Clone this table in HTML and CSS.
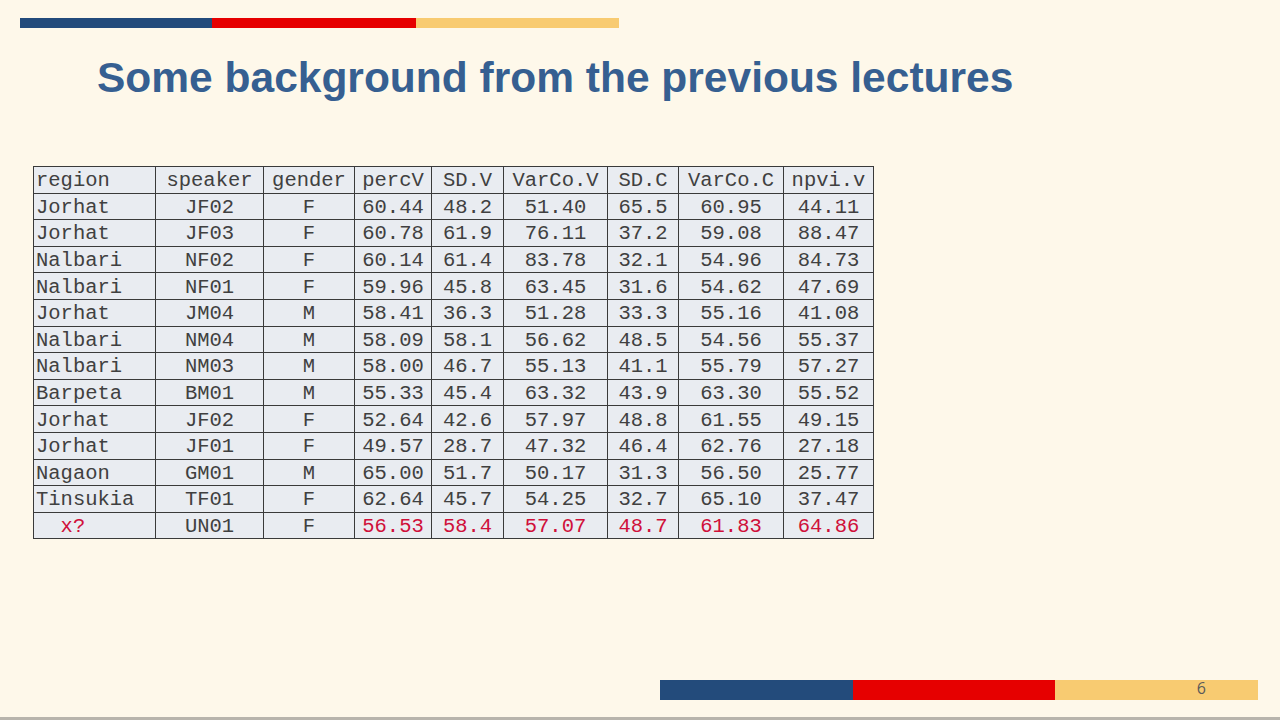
FILE: index.html
```html
<!DOCTYPE html>
<html>
<head>
<meta charset="utf-8">
<link rel="stylesheet" href="styles.css">
</head>
<body>
<div class="slide">
  <div class="bar top-bar"><span class="seg blue"></span><span class="seg red"></span><span class="seg yellow"></span></div>
  <h1 class="title">Some background from the previous lectures</h1>
  <table class="data">
    <colgroup>
      <col style="width:122px"><col style="width:108px"><col style="width:91px"><col style="width:77px"><col style="width:72px"><col style="width:104px"><col style="width:71px"><col style="width:105px"><col style="width:90px">
    </colgroup>
    <tr><td class="l">region</td><td>speaker</td><td>gender</td><td>percV</td><td>SD.V</td><td>VarCo.V</td><td>SD.C</td><td>VarCo.C</td><td>npvi.v</td></tr>
    <tr><td class="l">Jorhat</td><td>JF02</td><td>F</td><td>60.44</td><td>48.2</td><td>51.40</td><td>65.5</td><td>60.95</td><td>44.11</td></tr>
    <tr><td class="l">Jorhat</td><td>JF03</td><td>F</td><td>60.78</td><td>61.9</td><td>76.11</td><td>37.2</td><td>59.08</td><td>88.47</td></tr>
    <tr><td class="l">Nalbari</td><td>NF02</td><td>F</td><td>60.14</td><td>61.4</td><td>83.78</td><td>32.1</td><td>54.96</td><td>84.73</td></tr>
    <tr><td class="l">Nalbari</td><td>NF01</td><td>F</td><td>59.96</td><td>45.8</td><td>63.45</td><td>31.6</td><td>54.62</td><td>47.69</td></tr>
    <tr><td class="l">Jorhat</td><td>JM04</td><td>M</td><td>58.41</td><td>36.3</td><td>51.28</td><td>33.3</td><td>55.16</td><td>41.08</td></tr>
    <tr><td class="l">Nalbari</td><td>NM04</td><td>M</td><td>58.09</td><td>58.1</td><td>56.62</td><td>48.5</td><td>54.56</td><td>55.37</td></tr>
    <tr><td class="l">Nalbari</td><td>NM03</td><td>M</td><td>58.00</td><td>46.7</td><td>55.13</td><td>41.1</td><td>55.79</td><td>57.27</td></tr>
    <tr><td class="l">Barpeta</td><td>BM01</td><td>M</td><td>55.33</td><td>45.4</td><td>63.32</td><td>43.9</td><td>63.30</td><td>55.52</td></tr>
    <tr><td class="l">Jorhat</td><td>JF02</td><td>F</td><td>52.64</td><td>42.6</td><td>57.97</td><td>48.8</td><td>61.55</td><td>49.15</td></tr>
    <tr><td class="l">Jorhat</td><td>JF01</td><td>F</td><td>49.57</td><td>28.7</td><td>47.32</td><td>46.4</td><td>62.76</td><td>27.18</td></tr>
    <tr><td class="l">Nagaon</td><td>GM01</td><td>M</td><td>65.00</td><td>51.7</td><td>50.17</td><td>31.3</td><td>56.50</td><td>25.77</td></tr>
    <tr><td class="l">Tinsukia</td><td>TF01</td><td>F</td><td>62.64</td><td>45.7</td><td>54.25</td><td>32.7</td><td>65.10</td><td>37.47</td></tr>
    <tr><td class="l red-t">  x?</td><td>UN01</td><td>F</td><td class="red-t">56.53</td><td class="red-t">58.4</td><td class="red-t">57.07</td><td class="red-t">48.7</td><td class="red-t">61.83</td><td class="red-t">64.86</td></tr>
  </table>
  <div class="spacer"></div>
  <div class="bar bottom-bar"><span class="seg blue"></span><span class="seg red"></span><span class="seg yellow"><span class="pagenum">6</span></span></div>
  <div class="edge"></div>
</div>
</body>
</html>
```
FILE: styles.css
```css
html, body {
  margin: 0;
  padding: 0;
  background: #fef8ea;
}
.slide {
  width: 1280px;
  height: 720px;
  background: #fef8ea;
  display: flex;
  flex-direction: column;
  overflow: hidden;
}
.bar {
  display: flex;
  flex: none;
}
.top-bar {
  margin-top: 18px;
  margin-left: 20px;
  height: 10px;
}
.top-bar .blue { width: 192px; }
.top-bar .red { width: 204px; }
.top-bar .yellow { width: 203px; }
.seg { display: block; height: 100%; }
.blue { background: #234b7b; }
.red { background: #e60000; }
.yellow { background: #f8cb71; }
.title {
  margin: 26px 0 0 97px;
  font-family: "Liberation Sans", Arial, sans-serif;
  font-weight: bold;
  font-size: 42.5px;
  line-height: 48px;
  color: #365f91;
}
.data {
  margin: 64px 0 0 33px;
  border-collapse: collapse;
  table-layout: fixed;
  width: 840px;
  font-family: "Liberation Mono", "Courier New", monospace;
  font-size: 20.5px;
  color: #404040;
}
.data td {
  border: 1px solid #3a3a3a;
  background: #e9ecf1;
  height: 23.6px;
  padding: 2px 0 0 0;
  text-align: center;
  white-space: pre;
  line-height: 23px;
}
.data td.l {
  text-align: left;
  padding-left: 2px;
}
.data td.red-t {
  color: #d0103a;
}
.spacer { flex: 1; }
.bottom-bar {
  margin-left: 660px;
  height: 20px;
  margin-bottom: 17px;
}
.bottom-bar .blue { width: 193px; }
.bottom-bar .red { width: 202px; }
.bottom-bar .yellow {
  width: 203px;
  display: flex;
  justify-content: flex-end;
  align-items: flex-start;
}
.pagenum {
  font-family: "Open Sans", "Liberation Sans", sans-serif;
  font-size: 16px;
  line-height: 16px;
  color: #5a5a5a;
  margin-right: 52px;
  margin-top: 0px;
}
.edge {
  flex: none;
  height: 3px;
  background: #b8b4ac;
}
```
